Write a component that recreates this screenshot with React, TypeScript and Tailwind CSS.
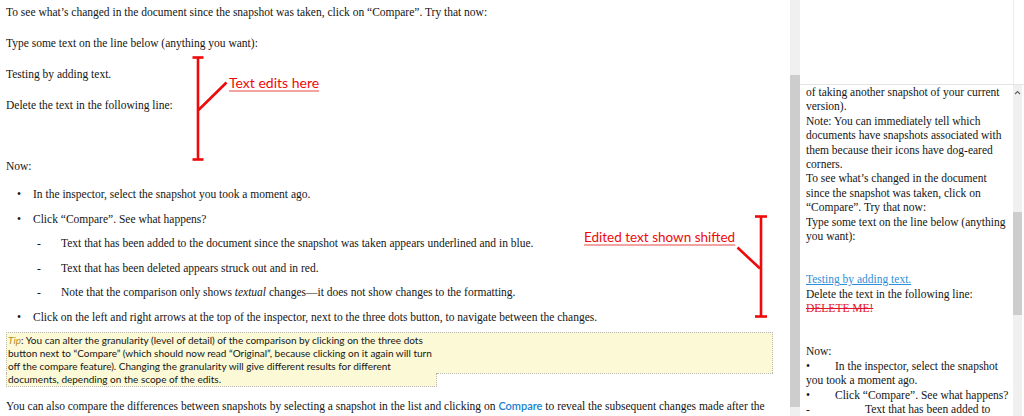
import React from 'react';

const serif = "font-['Liberation_Serif',serif]";
const sans = "font-['Lato','Liberation_Sans',sans-serif]";

const sideLines: { text: React.ReactNode; cls?: string }[] = [
  { text: 'of taking another snapshot of your current' },
  { text: 'version).' },
  { text: 'Note: You can immediately tell which' },
  { text: 'documents have snapshots associated with' },
  { text: 'them because their icons have dog-eared' },
  { text: 'corners.' },
  { text: 'To see what’s changed in the document' },
  { text: 'since the snapshot was taken, click on' },
  { text: '“Compare”. Try that now:' },
  { text: 'Type some text on the line below (anything' },
  { text: 'you want):' },
  { text: '\u00a0' },
  { text: '\u00a0' },
  { text: 'Testing by adding text.', cls: 'text-[#2f8fd6] underline' },
  { text: 'Delete the text in the following line:' },
  { text: 'DELETE ME!', cls: 'text-[#e2142d] line-through' },
  { text: '\u00a0' },
  { text: '\u00a0' },
  { text: 'Now:' },
  { text: <><span className="inline-block w-[29px]">•</span>In the inspector, select the snapshot</> },
  { text: 'you took a moment ago.' },
  { text: <><span className="inline-block w-[29px]">•</span>Click “Compare”. See what happens?</> },
  { text: <><span className="inline-block w-[59px]">-</span>Text that has been added to</> },
];

function Annotations() {
  return (
    <>
      <svg className="pointer-events-none absolute left-0 top-0" width="790" height="416">
        <g stroke="#ee0a0a" strokeWidth="2.6" fill="none">
          <line x1="198" y1="57" x2="198" y2="160" />
          <line x1="192.5" y1="57.5" x2="203.5" y2="57.5" />
          <line x1="192.5" y1="159.5" x2="203.5" y2="159.5" />
          <line x1="198.5" y1="110" x2="226.5" y2="82.5" />
          <line x1="761" y1="216" x2="761" y2="317" />
          <line x1="755" y1="216.5" x2="767" y2="216.5" />
          <line x1="755" y1="316.5" x2="767" y2="316.5" />
          <line x1="760" y1="268.5" x2="737.5" y2="247.5" />
        </g>
      </svg>
      <div
        className={`absolute left-[229px] top-[74px] ${sans} text-[14px] leading-[17px] text-[#ee0a0a] underline decoration-[#f4a3a3] decoration-[1.5px] underline-offset-[2px]`}
      >
        Text edits here
      </div>
      <div
        className={`absolute left-[584px] top-[229px] ${sans} text-[13.5px] leading-[17px] text-[#ee0a0a] underline decoration-[#f4a3a3] decoration-[1.5px] underline-offset-[2px]`}
      >
        Edited text shown shifted
      </div>
    </>
  );
}

export default function App() {
  return (
    <div className="flex h-[416px] w-[1024px] overflow-hidden bg-white">
      <main className={`relative w-[790px] shrink-0 overflow-hidden pl-[6px] pt-[5px] ${serif} text-[11.5px] leading-[14px] text-[#151515]`}>
        <p className="mb-[17px] whitespace-nowrap">
          To see what’s changed in the document since the snapshot was taken, click on “Compare”. Try that now:
        </p>
        <p className="mb-[17px]">Type some text on the line below (anything you want):</p>
        <p className="mb-[17px]">Testing by adding text.</p>
        <p className="mb-[47px]">Delete the text in the following line:</p>
        <p className="mb-[14px]">Now:</p>

        <ul className="flex flex-col gap-[10.5px]">
          <li className="flex">
            <span className="w-[27px] pl-[11px]">•</span>
            <span>In the inspector, select the snapshot you took a moment ago.</span>
          </li>
          <li className="flex">
            <span className="w-[27px] pl-[11px]">•</span>
            <span>Click “Compare”. See what happens?</span>
          </li>
          <li className="flex">
            <span className="w-[55px] pl-[31px]">-</span>
            <span>Text that has been added to the document since the snapshot was taken appears underlined and in blue.</span>
          </li>
          <li className="flex">
            <span className="w-[55px] pl-[31px]">-</span>
            <span>Text that has been deleted appears struck out and in red.</span>
          </li>
          <li className="flex">
            <span className="w-[55px] pl-[31px]">-</span>
            <span>
              Note that the comparison only shows <i>textual</i> changes—it does not show changes to the formatting.
            </span>
          </li>
          <li className="flex whitespace-nowrap">
            <span className="w-[27px] pl-[11px]">•</span>
            <span>
              Click on the left and right arrows at the top of the inspector, next to the three dots button, to navigate between the changes.
            </span>
          </li>
        </ul>

        <div className={`mt-[8px] w-[767px] ${sans} text-[10px] leading-[13px] text-[#151515]`}>
          <div className="border-x border-t border-dotted border-[#b9b9b0] bg-[#fbf9d6] px-px pt-px">
            <div>
              <i className="text-[#b08a2a]">Tip</i>: You can alter the granularity (level of detail) of the comparison by clicking on the three dots
            </div>
            <div>button next to “Compare” (which should now read “Original”, because clicking on it again will turn</div>
            <div>off the compare feature). Changing the granularity will give different results for different</div>
          </div>
          <div className="flex">
            <div className="w-[431px] border-x border-b border-dotted border-[#b9b9b0] bg-[#fbf9d6] px-px">
              documents, depending on the scope of the edits.
            </div>
            <div className="flex-1 border-t border-dotted border-[#b9b9b0]" />
          </div>
        </div>

        <p className="mt-[12px] whitespace-nowrap">
          You can also compare the differences between snapshots by selecting a snapshot in the list and clicking on{' '}
          <span className={`${sans} text-[11px] font-semibold text-[#1a7fd0]`}>Compare</span> to reveal the subsequent changes made after the
        </p>

        <Annotations />
      </main>

      <div className="flex w-[10px] shrink-0 flex-col bg-[#f0f0f0]">
        <div className="h-[75px]" />
        <div className="h-[332px] bg-[#cdcdcd]" />
      </div>

      <aside className="flex flex-1 flex-col">
        <div className="flex h-[85px] border-b border-[#e4e4e4]">
          <div className="flex-1" />
          <div className="w-[11px] border-l border-[#ececec]" />
        </div>
        <div className="flex flex-1 overflow-hidden">
          <div className={`flex-1 overflow-hidden pl-[6px] ${serif} text-[11.5px] leading-[14.4px] text-[#151515]`}>
            {sideLines.map((l, i) => (
              <div key={i} className={`whitespace-nowrap ${l.cls ?? ''}`}>
                {l.text}
              </div>
            ))}
          </div>
          <div className="relative mr-[2px] flex w-[9px] flex-col bg-[#f0f0f0]">
            <div className="flex h-[14px] items-center justify-center">
              <svg width="7" height="5" viewBox="0 0 7 5">
                <path d="M1 4 L3.5 1.5 L6 4" stroke="#606060" strokeWidth="1.1" fill="none" />
              </svg>
            </div>
            <div className="mt-[113px] h-[103px] bg-[#cdcdcd]" />
          </div>
        </div>
      </aside>
    </div>
  );
}
